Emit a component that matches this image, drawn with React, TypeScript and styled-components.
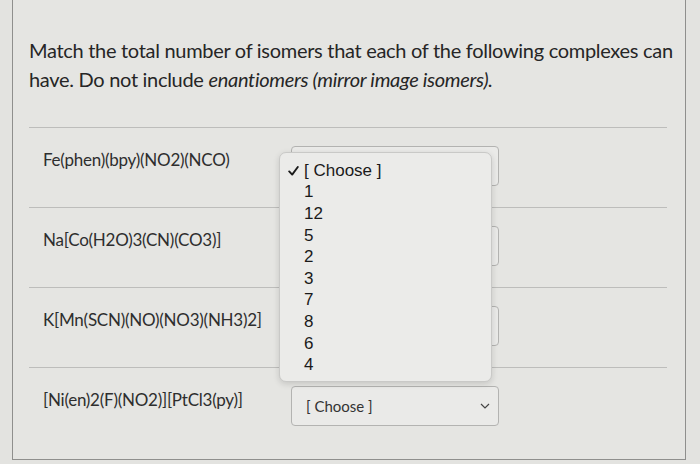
import React, { FC } from 'react';
import styled, { createGlobalStyle } from 'styled-components';

const GlobalStyle = createGlobalStyle`
  html, body {
    margin: 0;
    padding: 0;
    background: #e3e3e0;
  }
  body {
    font-family: Lato, "Open Sans", sans-serif;
    color: #2c2c2c;
  }
`;

const Page = styled.div`
  width: 700px;
  height: 464px;
  overflow: hidden;
  position: relative;
  box-sizing: border-box;
  padding: 0 14px 0 12px;
`;

const Panel = styled.div`
  height: 460px;
  box-sizing: border-box;
  border-left: 1.5px solid #8f8f8d;
  border-right: 1.5px solid #8f8f8d;
  border-bottom: 1.5px solid #8f8f8d;
  padding: 36px 18px 0 16px;
  background: #e5e5e2;
`;

const Question = styled.p`
  margin: 0 -16px 33px 0;
  font-size: 20px;
  line-height: 29px;
  letter-spacing: -0.3px;
  color: #262626;
  em {
    font-style: italic;
  }
`;

const Row = styled.div`
  display: flex;
  align-items: flex-start;
  height: 80px;
  border-top: 1px solid #bdbdbb;
  box-sizing: border-box;
  padding-left: 14px;
`;

const Label = styled.div`
  width: 248px;
  margin-top: 22px;
  font-size: 17px;
  line-height: 20px;
  color: #2e2e2e;
  letter-spacing: -0.25px;
`;

const Select = styled.div`
  margin-top: 18px;
  width: 208px;
  height: 40px;
  box-sizing: border-box;
  border: 1px solid #b3b3b1;
  border-radius: 4px;
  background: #eaeae8;
  display: flex;
  align-items: center;
  justify-content: space-between;
  padding: 0 8px 0 14px;
  font-size: 15px;
  color: #333;
`;

const Popup = styled.div`
  position: absolute;
  left: 279px;
  top: 152px;
  width: 213px;
  height: 230px;
  box-sizing: border-box;
  padding: 7px 0 0 8px;
  background: #ebebe9;
  border: 1px solid #c9c9c7;
  border-radius: 7px;
  box-shadow: 0 2px 6px rgba(0, 0, 0, 0.14);
  font-family: "Liberation Sans", Arial, sans-serif;
`;

const Option = styled.div`
  display: flex;
  align-items: center;
  height: 21.6px;
  font-size: 17px;
  color: #1a1a1a;
`;

const CheckSlot = styled.span`
  width: 16px;
  display: flex;
  align-items: center;
`;

const Check: FC = () => (
  <svg width="11" height="10" viewBox="0 0 11 10">
    <path d="M1.2 5.4l3 3.2L9.8 1" fill="none" stroke="#1a1a1a" strokeWidth="1.9" strokeLinecap="round" strokeLinejoin="round" />
  </svg>
);

const Chevron: FC = () => (
  <svg width="10" height="6" viewBox="0 0 10 6">
    <path d="M1 1l4 4 4-4" fill="none" stroke="#444" strokeWidth="1.2" />
  </svg>
);

const complexes = [
  'Fe(phen)(bpy)(NO2)(NCO)',
  'Na[Co(H2O)3(CN)(CO3)]',
  'K[Mn(SCN)(NO)(NO3)(NH3)2]',
  '[Ni(en)2(F)(NO2)][PtCl3(py)]',
];

const options = ['[ Choose ]', '1', '12', '5', '2', '3', '7', '8', '6', '4'];

const App: FC = () => (
  <>
    <GlobalStyle />
    <Page>
      <Panel>
        <Question>
          Match the total number of isomers that each of the following complexes can
          have. Do not include <em>enantiomers (mirror image isomers).</em>
        </Question>
        {complexes.map((c, i) => (
          <Row key={c}>
            <Label>{c}</Label>
            <Select>
              <span>{i === 3 ? '[ Choose ]' : ''}</span>
              <Chevron />
            </Select>
          </Row>
        ))}
      </Panel>
      <Popup>
        {options.map((o, i) => (
          <Option key={o}>
            <CheckSlot>{i === 0 && <Check />}</CheckSlot>
            {o}
          </Option>
        ))}
      </Popup>
    </Page>
  </>
);

export default App;
